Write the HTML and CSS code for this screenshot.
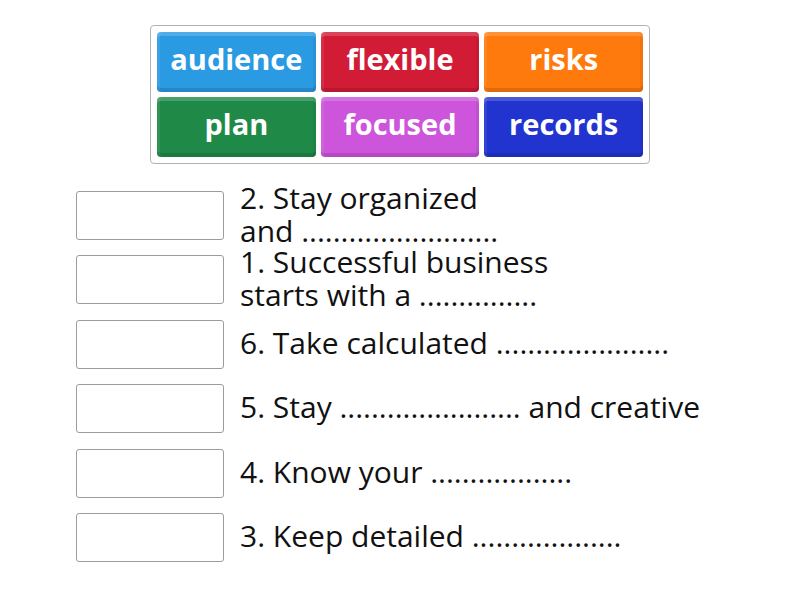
FILE: index.html
```html
<!DOCTYPE html>
<html>
<head>
<meta charset="utf-8">
<link rel="stylesheet" href="styles.css">
</head>
<body>
<div class="page">
  <div class="bank">
    <div class="tile blue">audience</div>
    <div class="tile red">flexible</div>
    <div class="tile orange">risks</div>
    <div class="tile green">plan</div>
    <div class="tile purple">focused</div>
    <div class="tile navy">records</div>
  </div>
  <div class="list">
    <div class="row"><div class="slot"></div><div class="text">2. Stay organized<br>and .........................</div></div>
    <div class="row"><div class="slot"></div><div class="text">1. Successful business<br>starts with a ...............</div></div>
    <div class="row"><div class="slot"></div><div class="text">6. Take calculated ......................</div></div>
    <div class="row"><div class="slot"></div><div class="text">5. Stay ....................... and creative</div></div>
    <div class="row"><div class="slot"></div><div class="text">4. Know your ..................</div></div>
    <div class="row"><div class="slot"></div><div class="text">3. Keep detailed ...................</div></div>
  </div>
</div>
</body>
</html>
```
FILE: styles.css
```css
html, body {
  margin: 0;
  padding: 0;
  background: #fff;
}
body {
  font-family: "Open Sans", "DejaVu Sans", sans-serif;
  color: #111;
}
.page {
  width: 800px;
  height: 600px;
  padding-top: 25px;
  box-sizing: border-box;
}
.bank {
  width: 500px;
  box-sizing: border-box;
  margin-left: 150px;
  border: 1px solid #b3b3b3;
  border-radius: 4px;
  padding: 6px;
  display: grid;
  grid-template-columns: repeat(3, 1fr);
  grid-auto-rows: 60px;
  gap: 5px;
}
.tile {
  border-radius: 4px;
  color: #fff;
  font-weight: 700;
  font-size: 29px;
  display: flex;
  align-items: center;
  justify-content: center;
  box-shadow: inset 0 4px 0 rgba(255,255,255,0.18), inset 0 -4px 0 rgba(0,0,0,0.12), inset 3px 0 0 rgba(255,255,255,0.08), inset -3px 0 0 rgba(0,0,0,0.05);
  padding-bottom: 8px;
  box-sizing: border-box;
}
.blue { background: #2a9ae3; }
.red { background: #d21c36; }
.orange { background: #ff7a0c; }
.green { background: #1f8a48; }
.purple { background: #cc55dc; }
.navy { background: #2234cf; }
.list {
  margin-top: 27px;
  margin-left: 76px;
  display: grid;
  grid-auto-rows: 49px;
  row-gap: 15.4px;
}
.row {
  display: flex;
  align-items: center;
  gap: 16px;
  height: 49px;
}
.slot {
  flex: none;
  width: 148px;
  height: 49px;
  box-sizing: border-box;
  border: 1px solid #9c9c9c;
  border-radius: 3px;
  background: #fff;
}
.text {
  font-size: 30px;
  line-height: 33px;
  white-space: nowrap;
  padding-bottom: 4px;
}
```
